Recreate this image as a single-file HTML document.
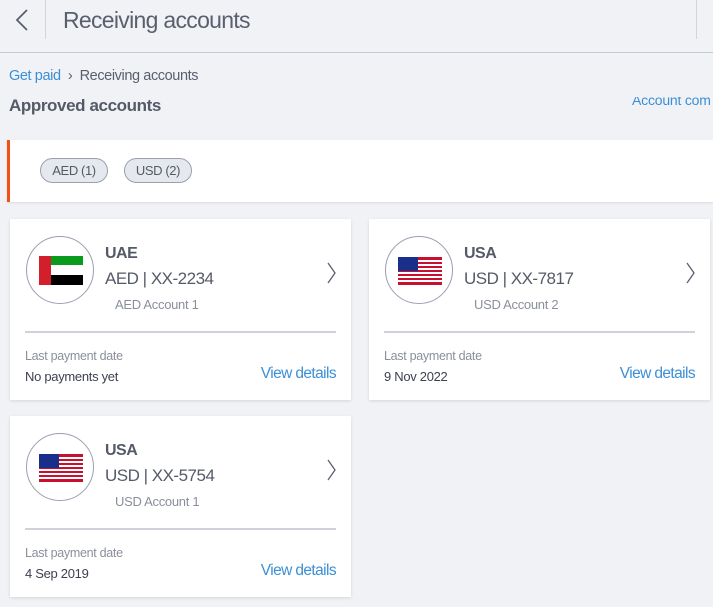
<!DOCTYPE html>
<html><head><meta charset="utf-8"><style>
*{margin:0;padding:0;box-sizing:border-box}
body{width:713px;height:607px;background:#f0f2f6;font-family:"Liberation Sans",sans-serif;position:relative;overflow:hidden;color:#5a5f6e}
.a{position:absolute;white-space:nowrap}
.card{position:absolute;width:341px;height:181px;background:#fff;box-shadow:0 1px 3px rgba(0,0,0,.12)}
.circ{position:absolute;left:16px;top:17px;width:68px;height:68px;border:1px solid #9aa0b0;border-radius:50%}
.t1{left:95px;top:26px;font-size:16px;font-weight:bold;color:#555a68;letter-spacing:-.5px}
.t2{left:95px;top:50px;font-size:17px;color:#555a68;letter-spacing:-.5px}
.t3{left:105px;top:78px;font-size:13px;color:#8a8f9c;letter-spacing:-.3px}
.hr{position:absolute;left:15px;top:112px;width:311px;height:2px;background:#cfd2da}
.l1{left:15px;top:130px;font-size:12.5px;color:#8a8f9c;letter-spacing:-.3px}
.l2{left:15px;top:150px;font-size:13px;color:#3d4150;letter-spacing:-.3px}
.vd{right:15px;top:146px;font-size:15.5px;color:#3b8fd6;letter-spacing:-.6px}
.chev{position:absolute;left:316px;top:42px}
</style></head><body>
<div class="a" style="left:0;top:0;width:713px;height:53px;border-bottom:1px solid #c8cbd4"></div>
<svg class="a" style="left:13px;top:8px" width="18" height="24"><path d="M14 2 L4 12 L14 22" stroke="#5a5f6e" stroke-width="1.8" fill="none"/></svg>
<div class="a" style="left:45px;top:0;width:1px;height:39px;background:#d2d5dc"></div>
<div class="a" style="left:63px;top:7px;font-size:23px;color:#5a5f6e;letter-spacing:-.7px">Receiving accounts</div>
<div class="a" style="left:696px;top:0;width:1px;height:39px;background:#d2d5dc"></div>
<div class="a" style="left:9px;top:68px;font-size:14.5px;letter-spacing:-.4px"><span style="color:#3b8fd6">Get paid</span> <span style="color:#5a5f6e">&nbsp;›&nbsp; Receiving accounts</span></div>
<div class="a" style="left:9px;top:99px;height:16px;overflow:hidden"><div style="margin-top:-3px;font-size:17px;font-weight:bold;color:#555a68;letter-spacing:-.4px">Approved accounts</div></div>
<div class="a" style="left:632px;top:97px;height:11px;overflow:hidden"><div style="margin-top:-5px;font-size:14px;color:#3b8fd6;letter-spacing:-.2px">Account com</div></div>
<div class="a" style="left:7px;top:140px;width:706px;height:62px;background:#fff;border-left:3px solid #f25314;box-shadow:0 1px 2px rgba(0,0,0,.1)"></div>
<div class="a" style="left:40px;top:158px;width:68px;height:25px;border:1px solid #9aa0b0;border-radius:13px;background:#e5e8ee;font-size:13px;text-align:center;line-height:23px;color:#555a68;letter-spacing:-.4px">AED (1)</div>
<div class="a" style="left:124px;top:158px;width:68px;height:25px;border:1px solid #9aa0b0;border-radius:13px;background:#e5e8ee;font-size:13px;text-align:center;line-height:23px;color:#555a68;letter-spacing:-.4px">USD (2)</div>

<div class="card" style="left:10px;top:219px">
<div class="circ"><svg style="position:absolute;left:12px;top:19px" width="44" height="29"><rect width="12" height="29" fill="#d21f2b"/><rect x="12" width="32" height="9" fill="#0a9b1c"/><rect x="12" y="9" width="32" height="11" fill="#fff"/><rect x="12" y="19" width="32" height="10" fill="#000"/></svg></div>
<div class="a t1">UAE</div><div class="a t2">AED | XX-2234</div><div class="a t3">AED Account 1</div>
<svg class="chev" width="12" height="24"><path d="M2 2 L9 12 L2 22" stroke="#5a5f6e" stroke-width="1.3" fill="none"/></svg>
<div class="hr"></div><div class="a l1">Last payment date</div><div class="a l2">No payments yet</div><div class="a vd">View details</div>
</div>

<div class="card" style="left:369px;top:219px">
<div class="circ"><svg style="position:absolute;left:12px;top:20px" width="44" height="29"><g fill="#c8102e"><rect width="44" height="3"/><rect y="5" width="44" height="2"/><rect y="9" width="44" height="2"/><rect y="13" width="44" height="2"/><rect y="17" width="44" height="2"/><rect y="21" width="44" height="2"/><rect y="25" width="44" height="3"/></g><rect width="20" height="14" fill="#1a2f8a"/></svg></div>
<div class="a t1">USA</div><div class="a t2">USD | XX-7817</div><div class="a t3">USD Account 2</div>
<svg class="chev" width="12" height="24"><path d="M2 2 L9 12 L2 22" stroke="#5a5f6e" stroke-width="1.3" fill="none"/></svg>
<div class="hr"></div><div class="a l1">Last payment date</div><div class="a l2">9 Nov 2022</div><div class="a vd">View details</div>
</div>

<div class="card" style="left:10px;top:416px">
<div class="circ"><svg style="position:absolute;left:12px;top:20px" width="44" height="29"><g fill="#c8102e"><rect width="44" height="3"/><rect y="5" width="44" height="2"/><rect y="9" width="44" height="2"/><rect y="13" width="44" height="2"/><rect y="17" width="44" height="2"/><rect y="21" width="44" height="2"/><rect y="25" width="44" height="3"/></g><rect width="20" height="14" fill="#1a2f8a"/></svg></div>
<div class="a t1">USA</div><div class="a t2">USD | XX-5754</div><div class="a t3">USD Account 1</div>
<svg class="chev" width="12" height="24"><path d="M2 2 L9 12 L2 22" stroke="#5a5f6e" stroke-width="1.3" fill="none"/></svg>
<div class="hr"></div><div class="a l1">Last payment date</div><div class="a l2">4 Sep 2019</div><div class="a vd">View details</div>
</div>
</body></html>
